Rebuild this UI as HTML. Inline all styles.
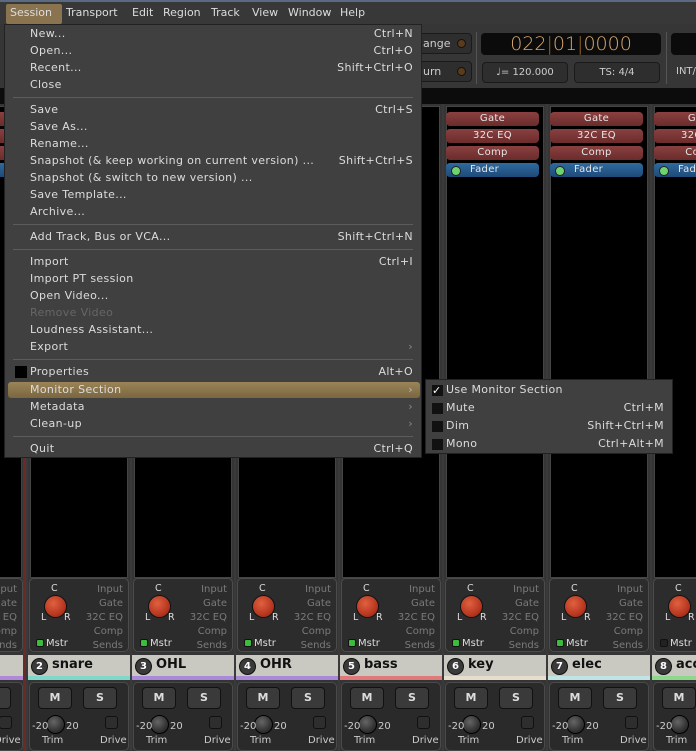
<!DOCTYPE html>
<html><head><meta charset="utf-8"><style>
*{margin:0;padding:0;box-sizing:border-box}
body{width:696px;height:751px;overflow:hidden;background:#3a3a3a;font-family:"DejaVu Sans","Liberation Sans",sans-serif;position:relative}
.a{position:absolute}
#clip{position:absolute;left:0;top:0;width:696px;height:751px;overflow:hidden}
#mb{left:0;top:0;width:696px;height:24px;background:#383838;border-top:2px solid #5a6a80;color:#ddd;font-size:11px}
#mb span{position:absolute;top:4px}
#tb{left:0;top:24px;width:696px;height:64px;background:#363636;overflow:hidden}
.btn{position:absolute;background:#2e2e2e;border:1px solid #1a1a1a;border-radius:4px;color:#ccc;font-size:10px;text-align:center}
#blk{left:0;top:88px;width:696px;height:16px;background:#0c0c0c}
.s{position:absolute;top:104px;width:102px;height:647px;background:#353535}
.pb{position:absolute;left:2px;top:2px;width:98px;height:472px;background:#000;border:1px solid #444}
.pl{position:absolute;left:2px;width:93px;height:14px;border-radius:4px;background:linear-gradient(#8a4040,#6a2c2c);color:#e6e6e6;font-size:10px;text-align:center;line-height:14px;letter-spacing:0.3px}
.fd{background:linear-gradient(#2f6aa0,#1e4a78);text-align:left;padding-left:24px}
.fd:before{content:"";position:absolute;left:5px;top:3px;width:8px;height:8px;border-radius:50%;background:#6fd36f;border:1px solid #222}
.pn{position:absolute;left:1px;top:474px;width:100px;height:74px;background:#2c2c2c;border:1px solid #4c4c4c;border-radius:5px}
.kn{position:absolute;left:15px;top:17px;width:21px;height:21px;border-radius:50%;background:radial-gradient(circle at 40% 35%,#e06040,#b83820 60%,#7a2010);box-shadow:0 0 0 1px #111}
.lb{position:absolute;color:#ddd;font-size:9.5px}
.rt{position:absolute;right:5px;color:#7a7a7a;font-size:10px;text-align:right}
.led{position:absolute;left:6px;top:60px;width:8px;height:8px;background:#3cbc3c;border:1px solid #111;border-radius:2px}
.nm{position:absolute;left:0;top:551px;width:102px;height:25px;background:#c9c9c2}
.nm .ul{position:absolute;left:0;bottom:0;width:102px;height:4px}
.nm .num{position:absolute;left:3px;top:3px;width:17px;height:17px;border-radius:50%;background:#3a3a3a;border:1px solid #111;color:#fff;font-size:10px;font-weight:bold;text-align:center;line-height:15px}
.nm .t{position:absolute;left:24px;top:2px;font-size:13px;font-weight:bold;color:#111}
.bt{position:absolute;left:1px;top:578px;width:100px;height:69px;background:#2a2a2a;border:1px solid #4a4a4a;border-radius:5px}
.ms{position:absolute;top:4px;width:34px;height:22px;background:#3a3a3a;border:1px solid #111;border-radius:4px;color:#ddd;font-weight:bold;font-size:11px;text-align:center;line-height:20px}
.tk{position:absolute;left:16px;top:32px;width:19px;height:19px;border-radius:50%;background:radial-gradient(circle at 40% 35%,#666,#333 60%,#1a1a1a);border:1px solid #000}
.dr{position:absolute;left:75px;top:33px;width:13px;height:13px;background:#2e2e2e;border:1px solid #111;border-radius:3px}
.sm{position:absolute;color:#ccc;font-size:10px}
#menu{left:4px;top:24px;width:418px;height:434px;background:#404040;border:1px solid #222;color:#dcdcdc;font-size:11px;letter-spacing:0.35px}
.r{position:absolute;left:0;width:416px;height:17px;line-height:17px}
.r .l{position:absolute;left:25px}
.r .k{position:absolute;right:8px}
.sep{position:absolute;left:8px;width:400px;height:1px;background:#5c5c5c}
#sub{left:425px;top:379px;width:248px;height:75px;background:#404040;border:1px solid #222;color:#dcdcdc;font-size:11px;letter-spacing:0.35px}
.cb{position:absolute;left:6px;top:4px;width:11px;height:11px;background:#111}
</style></head><body>
<div id="clip">
<div id="mb" class="a">
<div class="a" style="left:6px;top:2px;width:56px;height:20px;background:#8a7450;border-radius:2px"></div>
<span style="left:10px">Session</span><span style="left:66px">Transport</span><span style="left:132px">Edit</span><span style="left:163px">Region</span><span style="left:211px">Track</span><span style="left:252px">View</span><span style="left:288px">Window</span><span style="left:340px">Help</span>
</div>
<div id="tb" class="a">
<div class="btn" style="left:410px;top:9px;width:62px;height:21px;line-height:19px;text-align:left;padding-left:12px;font-size:11px">ange</div>
<div class="a" style="left:457px;top:15px;width:9px;height:9px;border-radius:50%;background:#5a3c1c;border:1px solid #111"></div>
<div class="btn" style="left:410px;top:37px;width:62px;height:21px;line-height:19px;text-align:left;padding-left:12px;font-size:11px">urn</div>
<div class="a" style="left:457px;top:43px;width:9px;height:9px;border-radius:50%;background:#5a3c1c;border:1px solid #111"></div>
<div class="a" style="left:476px;top:8px;width:1px;height:52px;background:#555"></div>
<div class="a" style="left:481px;top:9px;width:180px;height:22px;background:#0b0b0b;border-radius:4px;color:#d9a870;font-size:19px;text-align:center;line-height:22px;font-weight:300">022<span style="color:#a06a30">|</span>01<span style="color:#a06a30">|</span>0000</div>
<div class="btn" style="left:482px;top:38px;width:86px;height:21px;line-height:19px">♩= 120.000</div>
<div class="btn" style="left:574px;top:38px;width:86px;height:21px;line-height:19px">TS: 4/4</div>
<div class="a" style="left:666px;top:8px;width:1px;height:52px;background:#555"></div>
<div class="a" style="left:671px;top:9px;width:25px;height:22px;background:#0b0b0b;border-radius:4px 0 0 4px"></div>
<div class="a" style="left:676px;top:42px;color:#ccc;font-size:10px">INT/</div>
</div>
<div id="blk" class="a"></div>

<div class="s" style="left:-78px"><div class="pb"></div>
<div class="pl" style="top:8px">Gate</div><div class="pl" style="top:25px">32C EQ</div><div class="pl" style="top:42px">Comp</div><div class="pl fd" style="top:59px">Fader</div>
<div class="pn"><div class="rt" style="top:5px">Input</div><div class="rt" style="top:19px">Gate</div><div class="rt" style="top:33px">32C EQ</div><div class="rt" style="top:47px">Comp</div><div class="rt" style="top:61px">Sends</div></div>
<div class="nm"><div class="ul" style="background:#b088d8"></div></div>
<div class="bt"><div class="ms" style="left:53px"></div><div class="dr"></div><div class="sm" style="left:70px;top:52px">Drive</div></div>
</div>
<div class="a" style="left:23px;top:104px;width:3px;height:647px;background:#6a2a2a"></div>

<div class="s" style="left:28px"><div class="pb"></div>
<div class="pn"><div class="kn"></div><div class="lb" style="left:21px;top:4px">C</div><div class="lb" style="left:11px;top:33px">L</div><div class="lb" style="left:34px;top:33px">R</div><div class="led"></div><div class="lb" style="left:16px;top:59px;font-size:10px">Mstr</div><div class="rt" style="top:5px">Input</div><div class="rt" style="top:19px">Gate</div><div class="rt" style="top:33px">32C EQ</div><div class="rt" style="top:47px">Comp</div><div class="rt" style="top:61px">Sends</div></div>
<div class="nm"><div class="num">2</div><div class="t">snare</div><div class="ul" style="background:#80d8c8"></div></div>
<div class="bt"><div class="ms" style="left:8px">M</div><div class="ms" style="left:53px">S</div><div class="tk"></div><div class="sm" style="left:2px;top:38px">-20</div><div class="sm" style="left:36px;top:38px">20</div><div class="dr"></div><div class="sm" style="left:12px;top:52px">Trim</div><div class="sm" style="left:70px;top:52px">Drive</div></div>
</div>

<div class="s" style="left:132px"><div class="pb"></div>
<div class="pn"><div class="kn"></div><div class="lb" style="left:21px;top:4px">C</div><div class="lb" style="left:11px;top:33px">L</div><div class="lb" style="left:34px;top:33px">R</div><div class="led"></div><div class="lb" style="left:16px;top:59px;font-size:10px">Mstr</div><div class="rt" style="top:5px">Input</div><div class="rt" style="top:19px">Gate</div><div class="rt" style="top:33px">32C EQ</div><div class="rt" style="top:47px">Comp</div><div class="rt" style="top:61px">Sends</div></div>
<div class="nm"><div class="num">3</div><div class="t">OHL</div><div class="ul" style="background:#a88ad8"></div></div>
<div class="bt"><div class="ms" style="left:8px">M</div><div class="ms" style="left:53px">S</div><div class="tk"></div><div class="sm" style="left:2px;top:38px">-20</div><div class="sm" style="left:36px;top:38px">20</div><div class="dr"></div><div class="sm" style="left:12px;top:52px">Trim</div><div class="sm" style="left:70px;top:52px">Drive</div></div>
</div>

<div class="s" style="left:236px"><div class="pb"></div>
<div class="pn"><div class="kn"></div><div class="lb" style="left:21px;top:4px">C</div><div class="lb" style="left:11px;top:33px">L</div><div class="lb" style="left:34px;top:33px">R</div><div class="led"></div><div class="lb" style="left:16px;top:59px;font-size:10px">Mstr</div><div class="rt" style="top:5px">Input</div><div class="rt" style="top:19px">Gate</div><div class="rt" style="top:33px">32C EQ</div><div class="rt" style="top:47px">Comp</div><div class="rt" style="top:61px">Sends</div></div>
<div class="nm"><div class="num">4</div><div class="t">OHR</div><div class="ul" style="background:#a88ad8"></div></div>
<div class="bt"><div class="ms" style="left:8px">M</div><div class="ms" style="left:53px">S</div><div class="tk"></div><div class="sm" style="left:2px;top:38px">-20</div><div class="sm" style="left:36px;top:38px">20</div><div class="dr"></div><div class="sm" style="left:12px;top:52px">Trim</div><div class="sm" style="left:70px;top:52px">Drive</div></div>
</div>

<div class="s" style="left:340px"><div class="pb"></div>
<div class="pn"><div class="kn"></div><div class="lb" style="left:21px;top:4px">C</div><div class="lb" style="left:11px;top:33px">L</div><div class="lb" style="left:34px;top:33px">R</div><div class="led"></div><div class="lb" style="left:16px;top:59px;font-size:10px">Mstr</div><div class="rt" style="top:5px">Input</div><div class="rt" style="top:19px">Gate</div><div class="rt" style="top:33px">32C EQ</div><div class="rt" style="top:47px">Comp</div><div class="rt" style="top:61px">Sends</div></div>
<div class="nm"><div class="num">5</div><div class="t">bass</div><div class="ul" style="background:#e07a7a"></div></div>
<div class="bt"><div class="ms" style="left:8px">M</div><div class="ms" style="left:53px">S</div><div class="tk"></div><div class="sm" style="left:2px;top:38px">-20</div><div class="sm" style="left:36px;top:38px">20</div><div class="dr"></div><div class="sm" style="left:12px;top:52px">Trim</div><div class="sm" style="left:70px;top:52px">Drive</div></div>
</div>

<div class="s" style="left:444px"><div class="pb"></div>
<div class="pl" style="top:8px">Gate</div><div class="pl" style="top:25px">32C EQ</div><div class="pl" style="top:42px">Comp</div><div class="pl fd" style="top:59px">Fader</div>
<div class="pn"><div class="kn"></div><div class="lb" style="left:21px;top:4px">C</div><div class="lb" style="left:11px;top:33px">L</div><div class="lb" style="left:34px;top:33px">R</div><div class="led"></div><div class="lb" style="left:16px;top:59px;font-size:10px">Mstr</div><div class="rt" style="top:5px">Input</div><div class="rt" style="top:19px">Gate</div><div class="rt" style="top:33px">32C EQ</div><div class="rt" style="top:47px">Comp</div><div class="rt" style="top:61px">Sends</div></div>
<div class="nm"><div class="num">6</div><div class="t">key</div><div class="ul" style="background:#e6ddcc"></div></div>
<div class="bt"><div class="ms" style="left:8px">M</div><div class="ms" style="left:53px">S</div><div class="tk"></div><div class="sm" style="left:2px;top:38px">-20</div><div class="sm" style="left:36px;top:38px">20</div><div class="dr"></div><div class="sm" style="left:12px;top:52px">Trim</div><div class="sm" style="left:70px;top:52px">Drive</div></div>
</div>

<div class="s" style="left:548px"><div class="pb"></div>
<div class="pl" style="top:8px">Gate</div><div class="pl" style="top:25px">32C EQ</div><div class="pl" style="top:42px">Comp</div><div class="pl fd" style="top:59px">Fader</div>
<div class="pn"><div class="kn"></div><div class="lb" style="left:21px;top:4px">C</div><div class="lb" style="left:11px;top:33px">L</div><div class="lb" style="left:34px;top:33px">R</div><div class="led"></div><div class="lb" style="left:16px;top:59px;font-size:10px">Mstr</div><div class="rt" style="top:5px">Input</div><div class="rt" style="top:19px">Gate</div><div class="rt" style="top:33px">32C EQ</div><div class="rt" style="top:47px">Comp</div><div class="rt" style="top:61px">Sends</div></div>
<div class="nm"><div class="num">7</div><div class="t">elec</div><div class="ul" style="background:#c0e4e4"></div></div>
<div class="bt"><div class="ms" style="left:8px">M</div><div class="ms" style="left:53px">S</div><div class="tk"></div><div class="sm" style="left:2px;top:38px">-20</div><div class="sm" style="left:36px;top:38px">20</div><div class="dr"></div><div class="sm" style="left:12px;top:52px">Trim</div><div class="sm" style="left:70px;top:52px">Drive</div></div>
</div>

<div class="s" style="left:652px;width:44px;overflow:hidden"><div style="position:absolute;left:0;top:0;width:102px;height:647px">
<div class="pb"></div>
<div class="pl" style="top:8px">Gate</div><div class="pl" style="top:25px">32C EQ</div><div class="pl" style="top:42px">Comp</div><div class="pl fd" style="top:59px">Fader</div>
<div class="pn"><div class="kn"></div><div class="lb" style="left:21px;top:4px">C</div><div class="lb" style="left:11px;top:33px">L</div><div class="lb" style="left:34px;top:33px">R</div><div class="led" style="background:#222"></div><div class="lb" style="left:16px;top:59px;font-size:10px">Mstr</div></div>
<div class="nm"><div class="num">8</div><div class="t">acoustic</div><div class="ul" style="background:#8ed88e"></div></div>
<div class="bt"><div class="ms" style="left:8px">M</div><div class="tk"></div><div class="sm" style="left:2px;top:38px">-20</div><div class="sm" style="left:12px;top:52px">Trim</div></div>
</div></div>

<div id="menu" class="a">
<div class="r" style="top:0px"><span class="l">New...</span><span class="k">Ctrl+N</span></div>
<div class="r" style="top:17px"><span class="l">Open...</span><span class="k">Ctrl+O</span></div>
<div class="r" style="top:34px"><span class="l">Recent...</span><span class="k">Shift+Ctrl+O</span></div>
<div class="r" style="top:51px"><span class="l">Close</span></div>
<div class="sep" style="top:72px"></div>
<div class="r" style="top:76px"><span class="l">Save</span><span class="k">Ctrl+S</span></div>
<div class="r" style="top:93px"><span class="l">Save As...</span></div>
<div class="r" style="top:110px"><span class="l">Rename...</span></div>
<div class="r" style="top:127px"><span class="l">Snapshot (&amp; keep working on current version) ...</span><span class="k">Shift+Ctrl+S</span></div>
<div class="r" style="top:144px"><span class="l">Snapshot (&amp; switch to new version) ...</span></div>
<div class="r" style="top:161px"><span class="l">Save Template...</span></div>
<div class="r" style="top:178px"><span class="l">Archive...</span></div>
<div class="sep" style="top:199px"></div>
<div class="r" style="top:203px"><span class="l">Add Track, Bus or VCA...</span><span class="k">Shift+Ctrl+N</span></div>
<div class="sep" style="top:224px"></div>
<div class="r" style="top:228px"><span class="l">Import</span><span class="k">Ctrl+I</span></div>
<div class="r" style="top:245px"><span class="l">Import PT session</span></div>
<div class="r" style="top:262px"><span class="l">Open Video...</span></div>
<div class="r" style="top:279px;color:#666"><span class="l">Remove Video</span></div>
<div class="r" style="top:296px"><span class="l">Loudness Assistant...</span></div>
<div class="r" style="top:313px"><span class="l">Export</span><span class="k" style="color:#888">›</span></div>
<div class="sep" style="top:334px"></div>
<div class="r" style="top:338px"><div class="a" style="left:10px;top:3px;width:12px;height:12px;background:#000"></div><span class="l">Properties</span><span class="k">Alt+O</span></div>
<div class="a" style="left:3px;top:357px;width:412px;height:16px;background:linear-gradient(#9a8458,#7a6640);border-radius:3px"></div>
<div class="r" style="top:356px"><span class="l">Monitor Section</span><span class="k" style="color:#bbb">›</span></div>
<div class="r" style="top:373px"><span class="l">Metadata</span><span class="k" style="color:#888">›</span></div>
<div class="r" style="top:390px"><span class="l">Clean-up</span><span class="k" style="color:#888">›</span></div>
<div class="sep" style="top:411px"></div>
<div class="r" style="top:415px"><span class="l">Quit</span><span class="k">Ctrl+Q</span></div>
</div>
<div id="sub" class="a">
<div class="r" style="top:1px;width:246px"><div class="cb" style="color:#fff;font-size:11px;line-height:11px">✓</div><span class="l" style="left:20px">Use Monitor Section</span></div>
<div class="r" style="top:19px;width:246px"><div class="cb"></div><span class="l" style="left:20px">Mute</span><span class="k">Ctrl+M</span></div>
<div class="r" style="top:37px;width:246px"><div class="cb"></div><span class="l" style="left:20px">Dim</span><span class="k">Shift+Ctrl+M</span></div>
<div class="r" style="top:55px;width:246px"><div class="cb"></div><span class="l" style="left:20px">Mono</span><span class="k">Ctrl+Alt+M</span></div>
</div>
</div>
</body></html>
